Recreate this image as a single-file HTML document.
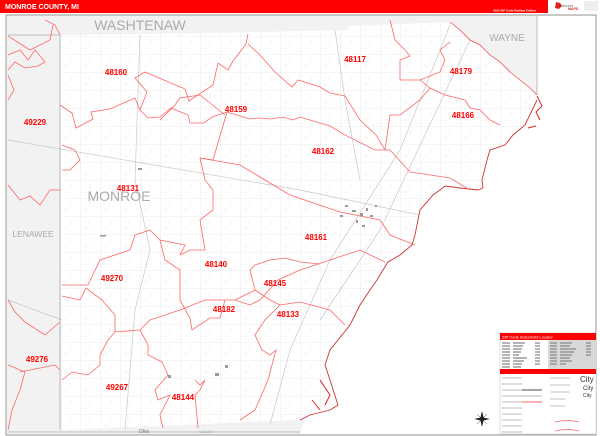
<!DOCTYPE html>
<html><head><meta charset="utf-8"><style>
html,body{margin:0;padding:0;background:#fff;width:600px;height:436px;overflow:hidden;font-family:"Liberation Sans",sans-serif}
svg{display:block}
</style></head><body>
<svg width="600" height="436" viewBox="0 0 600 436" xmlns="http://www.w3.org/2000/svg">
<defs>
<pattern id="grid" width="20" height="18" patternUnits="userSpaceOnUse">
<path d="M0 0H20M0 0V18" stroke="#dcdcdc" stroke-width="0.6" fill="none"/>
<path d="M10 4v5M4 12h4" stroke="#e4e4e4" stroke-width="0.5"/>
</pattern>
</defs>
<rect x="0" y="0" width="548" height="13" fill="#f00"/>
<text x="5" y="9" font-size="7" font-weight="bold" fill="#fff">MONROE COUNTY, MI</text>
<text x="493" y="11.5" font-size="3" fill="#fff" font-weight="bold">2023 ZIP Code Redline Edition</text>
<rect x="548" y="0" width="52" height="13" fill="#fff"/>
<path d="M556 2l4 1 2 3-3 3-4-1z" fill="#d22"/>
<text x="561" y="7" font-size="4" fill="#777" font-style="italic">Market</text>
<text x="568" y="10" font-size="3.5" fill="#d22" font-weight="bold">MAPS</text>
<rect x="584" y="1" width="14" height="10" fill="#eee"/>
<rect x="6" y="15" width="590" height="420" fill="#f2f2f2" stroke="#999" stroke-width="1"/>
<path d="M537 16H595V434H300L305 420 310 415 330 410 338 405 330 380 325 365 330 350 350 325 360 305 370 290 377 280 383 270 388 262 400 255 412 245 415 235 420 210 433 195 440 190 445 186 460 188 478 190 483 188 482 180 487 160 490 150 505 145 513 135 525 125 537 100Z" fill="#fff"/>
<path id="cty" d="M60 35L213 33 302 31 348 30 348 26 450 22 460 30 470 40 480 45 490 55 500 62 510 72 520 80 530 88 537 95 537 100 525 125 513 135 505 145 490 150 487 160 482 180 483 188 478 190 460 188 445 186 440 190 433 195 420 210 415 235 412 245 400 255 388 262 383 270 377 280 370 290 360 305 350 325 330 350 325 365 330 380 338 405 330 410 310 415 300 420 62 430Z" fill="#fff"/>
<path d="M60 35L213 33 302 31 348 30 348 26 450 22 460 30 470 40 480 45 490 55 500 62 510 72 520 80 530 88 537 95 537 100 525 125 513 135 505 145 490 150 487 160 482 180 483 188 478 190 460 188 445 186 440 190 433 195 420 210 415 235 412 245 400 255 388 262 383 270 377 280 370 290 360 305 350 325 330 350 325 365 330 380 338 405 330 410 310 415 300 420 62 430Z" fill="url(#grid)"/>
<g stroke="#c8c8c8" stroke-width="0.7" fill="none">
<path d="M140 35L135 180 150 250 135 310 125 430"/>
<path d="M450 25L400 150 330 260 290 350 270 425"/>
<path d="M470 40L380 230 320 320"/>
<path d="M8 300L62 320"/>
<path d="M8 140L300 190 420 215"/>
<path d="M335 30L345 100 360 180"/>
</g>
<g fill="#999">
<rect x="345" y="205" width="3" height="2"/><rect x="352" y="210" width="4" height="2"/><rect x="360" y="213" width="3" height="3"/><rect x="366" y="208" width="2" height="3"/><rect x="370" y="215" width="3" height="2"/><rect x="356" y="220" width="2" height="3"/><rect x="340" y="215" width="3" height="2"/><rect x="375" y="205" width="2" height="2"/><rect x="362" y="225" width="3" height="2"/>
<rect x="100" y="235" width="6" height="1.5"/><rect x="215" y="373" width="4" height="3"/><rect x="225" y="365" width="3" height="3"/><rect x="138" y="168" width="4" height="2"/><rect x="168" y="375" width="3" height="3"/>
</g>
<path d="M537 100L525 125 513 135 505 145 490 150 487 160 482 180 483 188 478 190 460 188 445 186 440 190 433 195 420 210 415 235 412 245 400 255 388 262 383 270 377 280 370 290 360 305 350 325 330 350 325 365 330 380 338 405 330 410 310 415 300 420" fill="none" stroke="#c33" stroke-width="0.9"/>
<path d="M450 22L460 30 470 40 480 45 490 55 500 62 510 72 520 80 530 88 537 95" fill="none" stroke="#e55" stroke-width="0.8"/>
<path d="M537 16V95" stroke="#aaa" stroke-width="0.8"/>
<path d="M537 96l5 10-6 6 4 8M528 128l8 -2M320 380l10 15 -5 10M312 400l8 10" stroke="#d22" stroke-width="1" fill="none"/>
<path d="M8 35H60V430M8 432H300" stroke="#aaa" stroke-width="0.8" fill="none"/>
<g stroke="#f66" stroke-width="0.8" fill="none">
<path d="M60 105L72 113 76 128 93 119 91 112 110 109 135 98 140 110 147 92 135 78 145 72 185 89 189 101 213 85 218 63 228 70 233 61 246 44 248 34"/>
<path d="M140 110L148 118 160 117 171 108 188 115 190 123 204 123 212 117 227 112 250 119 258 118 271 119 283 117 293 120 300 117 330 126 345 135 375 150 390 150 410 172 430 175 450 178 470 190"/>
<path d="M248 44L260 55 275 72 292 87 298 80 320 87 330 93 345 96 360 120 376 135 385 150"/>
<path d="M227 112L213 160 200 158 205 180 213 190 213 210 200 220 205 250 190 250 180 255"/>
<path d="M200 158L240 165 290 195 340 212 380 220 390 235 415 245"/>
<path d="M180 255L185 245 160 240 150 230 135 235 130 250 100 260 88 285 62 285"/>
<path d="M62 296L80 300 86 288 102 300 115 315 115 332 140 330 150 320 180 310 205 300 220 300 235 300 250 305 260 300 278 280 300 270 330 260 360 250 385 262"/>
<path d="M160 240L165 260 180 270 180 300 190 318 192 330 210 318 220 318 225 300"/>
<path d="M235 300L255 290 250 270 255 265 270 260 285 258 300 262 320 264"/>
<path d="M255 290L270 300 280 305 300 302 330 310 345 325"/>
<path d="M280 305L265 320 255 335 262 350 270 355 276 350 268 380 255 410 240 420"/>
<path d="M115 332L108 340 100 355 100 365 88 375 72 372 62 380"/>
<path d="M140 330L148 345 148 355 162 362 168 375 155 390 158 400 170 395 160 415 163 428"/>
<path d="M195 380L200 385 205 380 200 390 195 395 198 428"/>
<path d="M160 120L175 105 180 98 200 95 225 115"/>
<path d="M390 20L395 40 405 50 410 56 400 60 400 80 420 80 440 72 445 60 440 50 450 42"/>
<path d="M420 80L430 88 445 95 465 100 470 108 480 110 490 120 500 125"/>
<path d="M430 88L420 100 400 115 390 115 385 150"/>
<path d="M60 35L55 25 45 20M8 36L30 50 50 40 53 25"/>
<path d="M8 55L20 50 28 60 35 50 45 62 38 66 25 68 15 62 8 70M8 75L14 90 8 100"/>
<path d="M8 185L20 200 30 196 40 205 50 190 60 190M8 300L15 312 25 322 45 335 60 322"/>
<path d="M8 365L25 372 20 390 12 410 8 430M20 372L40 368 55 365 60 370"/>
<path d="M62 145L75 150 80 160 70 170 62 170"/>
</g>
<g font-size="8" font-weight="bold" fill="#f00" text-anchor="middle">
<text x="116" y="75">48160</text><text x="355" y="62">48117</text><text x="461" y="74">48179</text>
<text x="236" y="112">48159</text><text x="463" y="118">48166</text><text x="35" y="125">49229</text>
<text x="323" y="154">48162</text><text x="128" y="191">48131</text><text x="316" y="240">48161</text>
<text x="112" y="281">49270</text><text x="216" y="267">48140</text><text x="275" y="286">48145</text>
<text x="224" y="312">48182</text><text x="288" y="317">48133</text><text x="37" y="362">49276</text>
<text x="117" y="390">49267</text><text x="183" y="400">48144</text>
</g>
<g fill="#aaa" text-anchor="middle">
<text x="140" y="30" font-size="14">WASHTENAW</text>
<text x="507" y="41" font-size="10">WAYNE</text>
<text x="119" y="201" font-size="14">MONROE</text>
<text x="33" y="237" font-size="8.5">LENAWEE</text>
<text x="144" y="433" font-size="5" fill="#777">Ohio</text>
<text x="206" y="433" font-size="4" fill="#aaa">LUCAS</text>
</g>
<rect x="500" y="333" width="96" height="101" fill="#fff" stroke="#bbb" stroke-width="0.5"/>
<rect x="500" y="333" width="96" height="7" fill="#f00"/>
<text x="502" y="338.5" font-size="4" fill="#fff">ZIP Code Index/Grid Locator</text>
<rect x="548" y="340" width="48" height="29" fill="#d8d8d8"/>
<g stroke="#888" stroke-width="1.3">
<path d="M502 343h8m3 0h12m10 0h5M502 346h8m3 0h10m12 0h5M502 349h8m3 0h9m13 0h5M502 352h8m3 0h8m14 0h5M502 355h8m3 0h6m16 0h5M502 358h8m3 0h14m8 0h5M502 361h8m3 0h11m11 0h5M502 364h8m3 0h9m13 0h5M502 367h8m3 0h8"/>
<path d="M550 343h7m3 0h12m14 0h5M550 346h7m3 0h10m16 0h5M550 349h7m3 0h16m10 0h5M550 352h7m3 0h14m12 0h5M550 355h7m3 0h12m14 0h5M550 358h7m3 0h10M550 361h7m3 0h12M550 364h7m3 0h6"/>
</g>
<rect x="500" y="369" width="96" height="5" fill="#f00"/>
<g stroke="#aaa" stroke-width="0.8">
<path d="M502 378h20M502 384h20M502 390h20M502 396h20M502 402h20M502 408h20M502 414h20M502 420h20M502 426h20M502 432h20"/>
<path d="M522 390h20" stroke="#888" stroke-width="1.5"/><path d="M522 396h20" stroke="#ccc" stroke-width="1.5"/>
<path d="M522 402h20" stroke="#f66" stroke-width="1"/>
<path d="M550 378h20M550 385h20M550 392h20M550 399h15M550 406h15"/>
</g>
<text x="580" y="382" font-size="8" fill="#333">City</text>
<text x="583" y="390" font-size="6" fill="#333">City</text>
<text x="583" y="397" font-size="5" fill="#333">City</text>
<path d="M555 422q12-3 24 0M555 431q12-3 24 0" stroke="#f66" fill="none" stroke-width="0.8"/>
<g stroke="#222" stroke-width="0.6" fill="#222">
<path d="M482 412l1.5 7 -1.5 7 -1.5 -7z"/><path d="M475 419l7 -1.5 7 1.5 -7 1.5z"/>
<path d="M477 414l10 10M487 414l-10 10" fill="none" stroke-width="0.4"/>
</g>
</svg>
</body></html>
